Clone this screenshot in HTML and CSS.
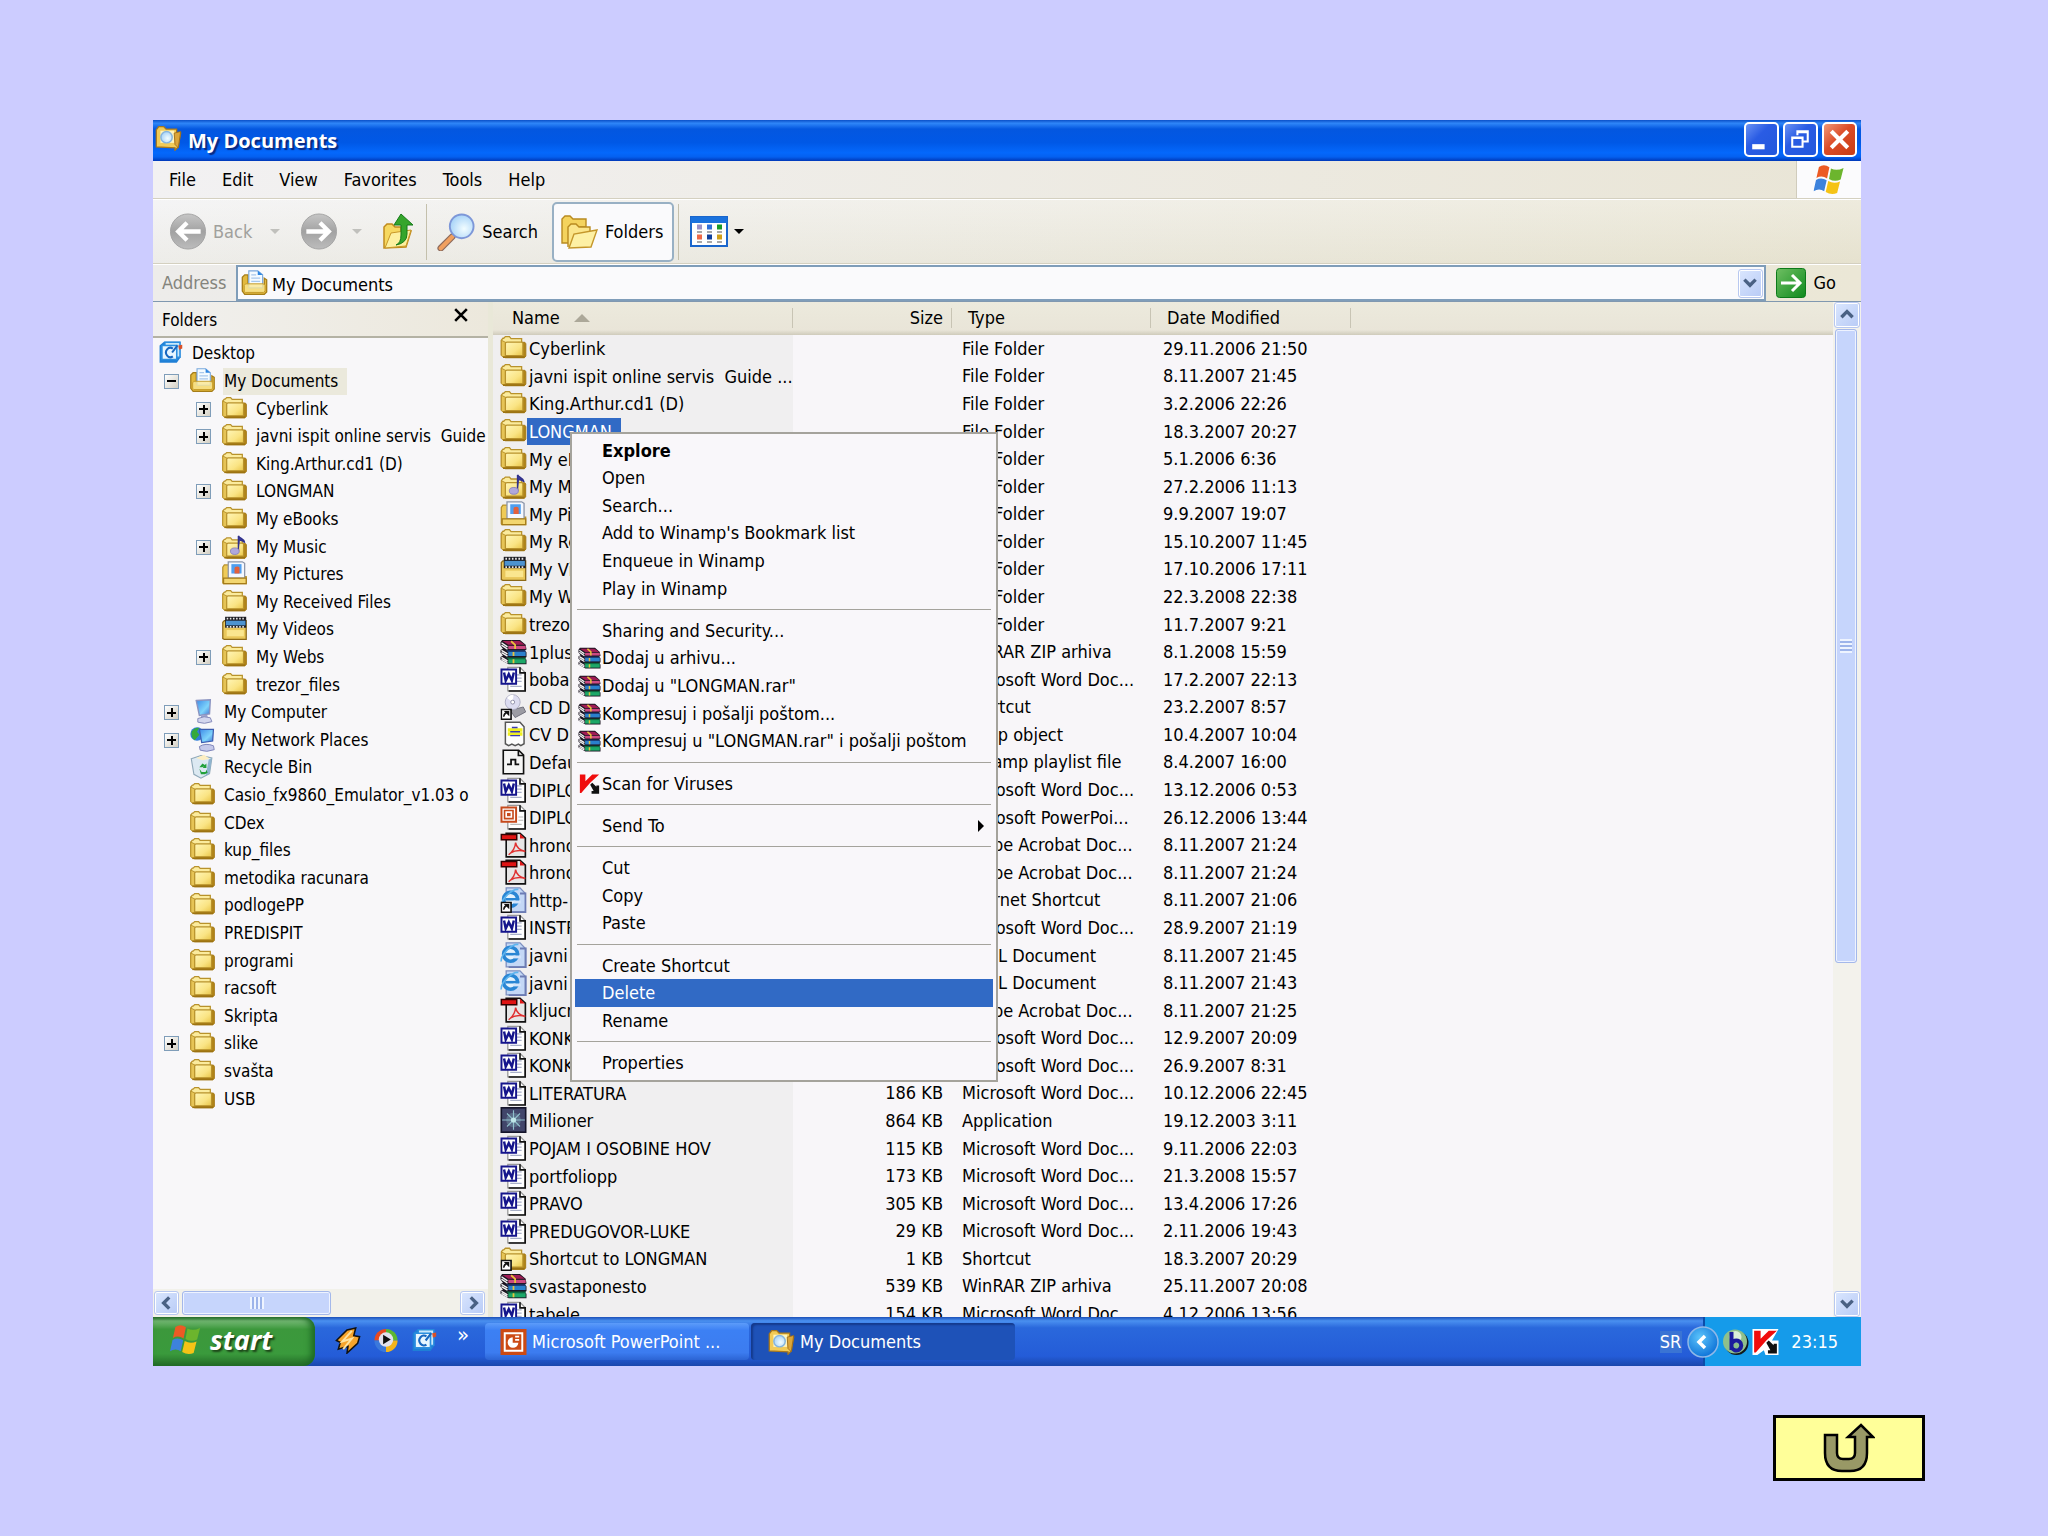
FILE: index.html
```html
<!DOCTYPE html>
<html lang="en">
<head>
<meta charset="utf-8">
<title>My Documents</title>
<link rel="stylesheet" href="styles.css">
</head>
<body>
<svg class="sprite" aria-hidden="true">
  <defs>
    <linearGradient id="g-gold" x1="0" y1="0" x2="1" y2="1"><stop offset="0" stop-color="#fff6b8"/><stop offset=".6" stop-color="#fae484"/><stop offset="1" stop-color="#e9c548"/></linearGradient>
    <linearGradient id="g-grey" x1="0" y1="0" x2="0" y2="1"><stop offset="0" stop-color="#c6c6c6"/><stop offset=".5" stop-color="#a2a2a2"/><stop offset="1" stop-color="#bcbcbc"/></linearGradient>
    <linearGradient id="g-green" x1="0" y1="0" x2="1" y2="1"><stop offset="0" stop-color="#6fbf63"/><stop offset="1" stop-color="#0e8a1c"/></linearGradient>
    <radialGradient id="g-lens" cx=".6" cy=".6" r=".6"><stop offset="0" stop-color="#f2fdff"/><stop offset="1" stop-color="#a9d4f8"/></radialGradient>
    <radialGradient id="g-tray" cx=".4" cy=".35" r=".7"><stop offset="0" stop-color="#5cc4fb"/><stop offset="1" stop-color="#0a6fd6"/></radialGradient>
    <linearGradient id="g-screen" x1="0" y1="0" x2="1" y2="1"><stop offset="0" stop-color="#3c8ae8"/><stop offset=".6" stop-color="#7fd4fb"/><stop offset="1" stop-color="#3d6fd0"/></linearGradient>
  </defs>
  <symbol id="folder" viewBox="0 0 16 16">
    <path d="M.5 12.500V3.200l1-1.200H2L3 1h2.500l1 1.200H13v3" fill="#fbeb9d" stroke="#b8922c" stroke-width=".8"/>
    <path d="M.5 3.200v9.500l1.500 1h2V5z" fill="#e6c456" stroke="#b8922c" stroke-width=".6"/>
    <path d="M13.500 4.500h1.500l.6.900V13l-.9 1H3z" fill="#b08418" stroke="#a67c1c" stroke-width=".6"/>
    <path d="M3 5.300q0-.9 1-.9h9q.8 0 .8.800v7.500H3z" fill="url(#g-gold)" stroke="#b8922c" stroke-width=".8"/>
    <path d="M1.500 13.600h13.300" stroke="#9c7312" stroke-width="1.100"/>
  </symbol>
  <symbol id="music" viewBox="0 0 16 16">
    <use href="#folder" y="1.500"/>
    <path d="M10.500 11V1.200c1 2 3.500 1.500 4 4.300-1-1.500-2.500-1.300-3-1.500" fill="#3a3a9c" stroke="#30308c" stroke-width=".9"/>
    <ellipse cx="8.200" cy="11" rx="2.800" ry="2.100" fill="#b0a8dc" stroke="#8078b8" stroke-width=".5"/>
  </symbol>
  <symbol id="pics" viewBox="0 0 16 16">
    <path d="M.5 14V4l1-1.500h3V10H15.500v4.500H1z" fill="#efcb57" stroke="#b8922c" stroke-width=".8"/>
    <path d="M4 .5h9l1.500 1V11H4z" fill="#f4f8ff" stroke="#8c95a8" stroke-width=".8"/>
    <path d="M6 2h6.500v6H6z" fill="#4f9ff0"/>
    <path d="M8 5q0-1.500 1.700-1.500T11.200 5v3H8z" fill="#e3603c"/>
    <path d="M1 11h14.500v3.500H1z" fill="#f3d670" stroke="#a67c18" stroke-width=".8"/>
  </symbol>
  <symbol id="video" viewBox="0 0 16 16">
    <path d="M.5 14.500V4l1-1h14v12H1.500z" fill="#e9c75a" stroke="#8d6a18" stroke-width=".8"/>
    <path d="M2 .5h13.500v7H2z" fill="#1c1c22"/>
    <path d="M2.500 3h12.500v3H2.500z" fill="#4d93cf"/>
    <path d="M3 1.700h12M3 6.900h12" stroke="#e8e8e8" stroke-width="1.100" stroke-dasharray="1 1"/>
    <path d="M3 9h11v4H3z" fill="#fae68f"/>
  </symbol>
  <symbol id="mydocs" viewBox="0 0 16 16">
    <path d="M.5 13V4.500L2 3h2v6h10V5l1.500 1v7.500L14 15H2z" fill="#e2b93e" stroke="#a57d18" stroke-width=".8"/>
    <path d="M4.500.5H10L13 3v8H4.500z" fill="#f4fbff" stroke="#7aa8dc" stroke-width=".7"/>
    <path d="M10 .5L13 3h-3z" fill="#2d86e2"/>
    <path d="M6 3h3M6 5h5.500M6 7h5.500" stroke="#a8c8ec" stroke-width=".8"/>
    <path d="M2.500 8.500h11l1 1V13l-1 .8h-11l-.8-.8V9.500z" fill="#fbe792" fill-opacity=".8" stroke="#c49a28" stroke-width=".6"/>
  </symbol>
  <symbol id="desk" viewBox="0 0 16 16">
    <path d="M1 3.500L4 1h10.500v10L12 14.500H1z" fill="#1f7fd6"/>
    <path d="M4.500 1.500H14v9.500H4.500z" fill="#c9e8fb" stroke="#2b8fe0" stroke-width=".8"/>
    <path d="M2.500 3.500h9.500v9H2.500z" fill="#e7f6ff" stroke="#2b8fe0"/>
    <path d="M9.500 5.500a2.800 3 0 1 0 0 5M9 8L12.500 3.500" fill="none" stroke="#1868c0" stroke-width="1.300"/>
    <path d="M13 3.500l2.500-.5v2.500l-2 .8z" fill="#d8502a"/>
  </symbol>
  <symbol id="computer" viewBox="0 0 16 16">
    <path d="M4 1l9-.5L12.500 9.500 6 10.500z" fill="url(#g-screen)" stroke="#8b93c0" stroke-width=".9"/>
    <path d="M7 10.500l4-.5.500 2H7z" fill="#9aa0cc"/>
    <path d="M5 12.500q4-2 8-.5l1 2.500q-5 2-9 .3z" fill="#d3d6ee" stroke="#8288b8" stroke-width=".6"/>
  </symbol>
  <symbol id="network" viewBox="0 0 16 16">
    <circle cx="4.500" cy="4.500" r="4.300" fill="#2f7edb"/>
    <path d="M1 3q2-3 5-2.500L4.500 3 6 5 3 8.500Q.5 6.500 1 3z" fill="#35a93c"/>
    <path d="M6 1.500h9L14.500 9 7.500 10z" fill="url(#g-screen)" stroke="#3c5cb0" stroke-width=".8"/>
    <path d="M6 12.500q4-2.500 9-.5l.5 2.500q-5 2-9 .3z" fill="#c5c9ea" stroke="#7c82b8" stroke-width=".6"/>
  </symbol>
  <symbol id="bin" viewBox="0 0 16 16">
    <path d="M.8 3L7 1l7 1.500L12.500 12.500 7 15.500 2.500 13z" fill="#dce9f2" stroke="#8fa8b8" stroke-width=".7"/>
    <path d="M4 2.500l5-2L12.500 3 8 4z" fill="#fdeec2"/>
    <path d="M12 3.500l2-1-1.500 10L10 14z" fill="#8fb4cf"/>
    <path d="M6 8.500l2-2.500 1.500 1 1-1v3H8L9 8 7.500 8.500zM6 9.500l1.500 2H10l.5-1.500.8 2L9.500 13H7z" fill="#22a03a"/>
  </symbol>
  <symbol id="word" viewBox="0 0 16 16">
    <path d="M4.500.8H12l3 3v11.500H4.500z" fill="#fff" stroke="#9a9a9a" stroke-width=".8"/>
    <path d="M12 .8v3.400h3.200V15.400H5" fill="none" stroke="#111" stroke-width="1"/>
    <path d="M10 5.500h3M10 7.500h3M10 9.500h3M6 12.500h7" stroke="#a9b0c8" stroke-width=".7"/>
    <path d="M.6 2.100h9v8.800h-9z" fill="#fff" stroke="#15158c" stroke-width="1.200"/>
    <path d="M2.200 4l1 5L5.100 5 7 9l1.200-5" fill="none" stroke="#15158c" stroke-width="1.500"/>
  </symbol>
  <symbol id="ppt" viewBox="0 0 16 16">
    <path d="M4.500.8H12l3 3v11.500H4.500z" fill="#fff" stroke="#9a9a9a" stroke-width=".8"/>
    <path d="M12 .8v3.400h3.200V15.400H5" fill="none" stroke="#111"/>
    <path d="M6 12.500h7M11 8h3M11 10h3" stroke="#b9b9b9" stroke-width=".7"/>
    <path d="M.6 2.100h9v8.800h-9z" fill="#fff" stroke="#c64a1c" stroke-width="1.200"/>
    <path d="M2.500 4h5.200v5H2.500z" fill="none" stroke="#c64a1c"/>
    <path d="M4 5.500h2.200v2H4z" fill="#c64a1c"/>
  </symbol>
  <symbol id="pdf" viewBox="0 0 16 16">
    <path d="M3.500.8H12l3.300 3v11.500H3.500z" fill="#e6e6e6" stroke="#111"/>
    <path d="M12 1l3 3h-3z" fill="#e01818"/>
    <path d="M.5 1.600h9.500v3.200H.5z" fill="#e01414" stroke="#300" stroke-width=".9"/>
    <path d="M5 14q4-3 4.300-7.500.5 4 6 5.500-5-1.500-9.300 1" fill="none" stroke="#e03030" stroke-width=".9"/>
  </symbol>
  <symbol id="html" viewBox="0 0 16 16">
    <path d="M3.500.5H12L15.300 4v11.300H3.500z" fill="#c4d8f6" stroke="#7e90c0" stroke-width=".8"/>
    <path d="M12 4h3.500v11.500H5" fill="none" stroke="#6c7cb4" stroke-width="1.200"/>
    <circle cx="6.200" cy="7.500" r="4.300" fill="#e4f2fd" stroke="#2a86d4" stroke-width="2.200"/>
    <path d="M3 7.500h8.500" stroke="#2a86d4" stroke-width="1.600"/>
    <path d="M8 9.200h4.500" stroke="#d4e4fa" stroke-width="1.800"/>
    <path d="M.5 12Q0 9 4 5t7-3.500" fill="none" stroke="#5db4ee"/>
  </symbol>
  <symbol id="arrowmark" viewBox="0 0 16 16">
    <path d="M.5 9.500h6v6h-6z" fill="#fff" stroke="#111"/>
    <path d="M2 14q0-2.500 2-2.500M3 10.800h2v2z" fill="#111" stroke="#111" stroke-width=".8"/>
  </symbol>
  <symbol id="url" viewBox="0 0 16 16"><use href="#html"/><use href="#arrowmark"/></symbol>
  <symbol id="flink" viewBox="0 0 16 16"><use href="#folder" y="1"/><use href="#arrowmark"/></symbol>
  <symbol id="cd" viewBox="0 0 16 16">
    <path d="M6 10l8-2 1.500 3L9 14.500z" fill="#9c9ca4" stroke="#70707c" stroke-width=".6"/>
    <circle cx="7.500" cy="5" r="4.600" fill="#dcdcf0" stroke="#b0b0c4" stroke-width=".6"/>
    <path d="M7.500 5L4 2.500a4.500 4.500 0 0 1 4-2z" fill="#fff"/>
    <circle cx="7.500" cy="5" r="1.200" fill="#fff" stroke="#9090a8" stroke-width=".6"/>
    <use href="#arrowmark"/>
  </symbol>
  <symbol id="scrap" viewBox="0 0 16 16">
    <path d="M3 .8h9l2.500 2.700V14l-2 1.200-1.500-1-2 1-2-1-2 1L3 14z" fill="#fdfdfd" stroke="#555" stroke-width=".9"/>
    <path d="M4.500 5.500h9M4.500 8h9" stroke="#eeee20" stroke-width="2.200"/>
    <path d="M7 4h3.500M6 6.600h6M6 9h6" stroke="#3a3ab0" stroke-width=".8"/>
  </symbol>
  <symbol id="plist" viewBox="0 0 16 16">
    <path d="M1.700.8h9.500l3 3v11.400H1.700z" fill="#f6f6f6" stroke="#111"/>
    <path d="M11 .8V4h3" fill="none" stroke="#111"/>
    <path d="M4 9.500h2.500v-3h2.700v3H11.500" fill="none" stroke="#111" stroke-width="1.100"/>
  </symbol>
  <symbol id="rar" viewBox="0 0 16 16">
    <path d="M1 .6h11l3.500 3L16 6.400l-1 .6 1 1.200V11l-1 .8 1 1v2.800H5L0 12.800V11l1.500-.8L0 8.500V6.800L1.500 6 0 4V2z" fill="#1b1420"/>
    <path d="M1.200 1.200h10.500L15 3.600H4.800z" fill="#a01c54"/>
    <path d="M4.800 4.200H15.500V6.200H4.800z" fill="#cc4a82"/>
    <path d="M3.500 7h12v.9h-11z" fill="#1c4e98"/>
    <path d="M4.800 8H15.500v2.500H4.800z" fill="#2a80cc"/>
    <path d="M3.500 11.400h12v.9h-11z" fill="#0e6a40"/>
    <path d="M4.800 12.400H15.500v2.600H4.800z" fill="#1ca868"/>
    <path d="M.6 2.300l3.700 2.600M.6 3.800l3.700 2.500M.6 7l3.700 2.200M.6 8.400l3.700 2.200M.6 11.300l3.700 2.200M.6 12.600l3.700 2" stroke="#f4f4f4" stroke-width=".9"/>
    <path d="M6.500 1.400L9 3.600v2.600M8 8v2.400M8 12.500v2.400" fill="none" stroke="#e8c23c" stroke-width="1.100"/>
  </symbol>
  <symbol id="mil" viewBox="0 0 16 16">
    <path d="M0 0h16v16H0z" fill="#14142a"/>
    <path d="M1 1h14v14H1z" fill="#41456a"/>
    <circle cx="8" cy="8" r="4.500" fill="#5a6c88"/>
    <path d="M8 2v12M1 8h14M4 4l8 8M12 4l-8 8" stroke="#8fc0cc" stroke-width=".7"/>
    <circle cx="8" cy="8" r="1.600" fill="#bfe6e8"/>
  </symbol>
  <symbol id="kav" viewBox="0 0 16 16">
    <path d="M1 1h4v5l5-5h5L8.500 7 2 14.500H1z" fill="#f00d0d"/>
    <path d="M8.500 8.500l1.500-1.500 3 3V9h2v6H9.500v-2h1.500z" fill="#111"/>
  </symbol>
  <symbol id="explorer" viewBox="0 0 16 16">
    <path d="M.5 13.500V3l1.500-2H5l1.500 1.500H13v2L15.500 5 14 13.500 12 15.500V14z" fill="#f2cb57" stroke="#a8781c" stroke-width=".8"/>
    <path d="M3 3.500h8.500V11H3z" fill="#fff4bc"/>
    <path d="M11.500 5l4-1L14 14l-2-2z" fill="#dca63a" stroke="#98681a" stroke-width=".5"/>
    <circle cx="6.800" cy="7.500" r="3.500" fill="url(#g-lens)" stroke="#86b4dc" stroke-width=".9"/>
  </symbol>
  <symbol id="flag" viewBox="0 0 16 16">
    <path d="M2.800 1.500q2.700-1.700 5.400.2L7 7.500Q4.300 5.600 1.500 7.200z" fill="#ec5a24"/>
    <path d="M9 2.300q3 1.500 6.500-.3L14 8q-3 1.500-6-.3z" fill="#6cb52d"/>
    <path d="M1.300 8.200q2.800-1.500 5.500.2L5.500 14Q3 12.400 0 14z" fill="#3d82dc"/>
    <path d="M7.600 8.800q3 1.600 6.100.2L12.200 15q-3 1.300-5.900-.5z" fill="#f5c316"/>
  </symbol>
  <symbol id="power" viewBox="0 0 16 16">
    <path d="M0 0h16v16H0z" fill="#cc4a14"/>
    <path d="M2.600 2.600h10.800v10.800H2.600z" fill="none" stroke="#fff" stroke-width="1.200"/>
    <path d="M7.500 5v3.500h3.500a3.300 3.300 0 1 1-3.500-3.500z" fill="#fff"/>
    <path d="M9 4.700h2.500M9 6.700h2.500" stroke="#fff"/>
  </symbol>
</svg>

<main class="slide">
<section class="screen">
  <header class="titlebar">
    <svg class="ico"><use href="#explorer"/></svg>
    <h1>My Documents</h1>
    <button class="cap" aria-label="Minimize"><svg viewBox="0 0 30 30"><path d="M6 22h12" stroke="#fff" stroke-width="5"/></svg></button>
    <button class="cap" aria-label="Restore"><svg viewBox="0 0 30 30" fill="none" stroke="#fff" stroke-width="2"><path d="M7 13h10v9H7zM7 13.500h10M12 11V7h10v10h-4M12 8h10"/></svg></button>
    <button class="cap close" aria-label="Close"><svg viewBox="0 0 30 30"><path d="M7 7l16 16M23 7L7 23" stroke="#fff" stroke-width="4"/></svg></button>
  </header>

  <nav class="menubar">
    <button>File</button><button>Edit</button><button>View</button><button>Favorites</button><button>Tools</button><button>Help</button>
    <span class="brand"><svg viewBox="0 0 16 16"><use href="#flag"/></svg></span>
  </nav>

  <div class="toolbar">
    <button class="tool off"><svg class="big" viewBox="0 0 38 38"><circle cx="19" cy="19" r="18" fill="url(#g-grey)" stroke="#a4a4a4"/><path d="M32 19H10M18 10l-9 9 9 9" fill="none" stroke="#fff" stroke-width="4.500"/></svg>Back<i class="drop"></i></button>
    <button class="tool off fwd" aria-label="Forward"><svg class="big" viewBox="0 0 38 38"><circle cx="19" cy="19" r="18" fill="url(#g-grey)" stroke="#a4a4a4"/><path d="M6 19h22M20 10l9 9-9 9" fill="none" stroke="#fff" stroke-width="4.500"/></svg><i class="drop"></i></button>
    <button class="tool up" aria-label="Up"><svg viewBox="0 0 32 38"><path d="M2 35V14l3-3h5l3 3h6v4h10l-5 16z" fill="#f6d860" stroke="#c08a1c" stroke-width="1.500"/><path d="M3 35l6-15 20-3-5 16z" fill="#fdf0a0" stroke="#c89828"/><path d="M14 32q5-2 5-10V12h-7L19 1l12 11h-6v9q0 9-11 11z" fill="#35a52c" stroke="#157a18"/></svg></button>
    <span class="rule"></span>
    <button class="tool find"><svg class="lens" viewBox="0 0 40 40"><path d="M16 25L4 37" stroke="#8c6a5c" stroke-width="7" stroke-linecap="round"/><path d="M16 25L4 37" stroke="#f0a060" stroke-width="4.500" stroke-linecap="round"/><circle cx="26" cy="14" r="12.500" fill="url(#g-lens)" stroke="#7d97d8" stroke-width="2"/></svg>Search</button>
    <button class="tool on"><svg class="big" viewBox="0 0 38 34"><path d="M1 28V4l3-3h5l3 3h13v8h-6v16z" fill="#f4d35e" stroke="#b88a20" stroke-width="1.400"/><path d="M7 32V12l3-3h5l3 3h11v4" fill="#fbe58a" stroke="#b88a20" stroke-width="1.400"/><path d="M8 33l5-14 23-4-6 17z" fill="#fdf0a4" stroke="#c4962a" stroke-width="1.400"/></svg>Folders</button>
    <span class="rule"></span>
    <button class="tool views" aria-label="Views"><svg class="big" viewBox="0 0 38 31"><rect x="1" y="1" width="36" height="29" fill="#fff" stroke="#1a66cc" stroke-width="2"/><path d="M1 4h36" stroke="#1a72dd" stroke-width="6"/><path d="M7 11h5" stroke="#9a90c8" stroke-width="5"/><path d="M17 11h5" stroke="#3070d8" stroke-width="5"/><path d="M27 11h5" stroke="#189a28" stroke-width="5"/><path d="M7 21h5" stroke="#ee6a48" stroke-width="5"/><path d="M17 21h5" stroke="#10409c" stroke-width="5"/><path d="M27 21h5" stroke="#d0a018" stroke-width="5"/><path d="M7 16h5M17 16h5M27 16h5M7 26h5M17 26h5M27 26h5" stroke="#a8a8a8" stroke-width="2"/></svg><i class="drop"></i></button>
  </div>

  <div class="addressbar">
    <label for="addr">Address</label>
    <div class="combo">
      <svg class="ico"><use href="#mydocs"/></svg>
      <input id="addr" type="text" value="My Documents">
      <button class="sb" aria-label="Show addresses"><svg viewBox="0 0 16 16"><path d="M3 5l5 5 5-5"/></svg></button>
    </div>
    <button class="go"><svg viewBox="0 0 30 30"><rect x=".5" y=".5" width="29" height="29" rx="3" fill="url(#g-green)" stroke="#0c7a1a"/><path d="M5 15h18M16 7l8 8-8 8" fill="none" stroke="#fff" stroke-width="3"/></svg>Go</button>
  </div>

  <div class="panes">
    <aside class="folders">
      <div class="folders-head"><h2>Folders</h2><button aria-label="Close folders"><svg viewBox="0 0 12 12"><path d="M1 1l10 10M11 1L1 11" stroke="#000" stroke-width="2.200"/></svg></button></div>
      <ul class="tree">
        <li><svg class="ico"><use href="#desk"/></svg><span>Desktop</span></li>
        <li class="l1"><button class="exp minus" aria-label="Collapse"></button><svg class="ico"><use href="#mydocs"/></svg><span class="cur">My Documents</span></li>
        <li class="l2"><button class="exp" aria-label="Expand"></button><svg class="ico"><use href="#folder"/></svg><span>Cyberlink</span></li>
        <li class="l2"><button class="exp" aria-label="Expand"></button><svg class="ico"><use href="#folder"/></svg><span>javni ispit online servis  Guide</span></li>
        <li class="l2"><svg class="ico"><use href="#folder"/></svg><span>King.Arthur.cd1 (D)</span></li>
        <li class="l2"><button class="exp" aria-label="Expand"></button><svg class="ico"><use href="#folder"/></svg><span>LONGMAN</span></li>
        <li class="l2"><svg class="ico"><use href="#folder"/></svg><span>My eBooks</span></li>
        <li class="l2"><button class="exp" aria-label="Expand"></button><svg class="ico"><use href="#music"/></svg><span>My Music</span></li>
        <li class="l2"><svg class="ico"><use href="#pics"/></svg><span>My Pictures</span></li>
        <li class="l2"><svg class="ico"><use href="#folder"/></svg><span>My Received Files</span></li>
        <li class="l2"><svg class="ico"><use href="#video"/></svg><span>My Videos</span></li>
        <li class="l2"><button class="exp" aria-label="Expand"></button><svg class="ico"><use href="#folder"/></svg><span>My Webs</span></li>
        <li class="l2"><svg class="ico"><use href="#folder"/></svg><span>trezor_files</span></li>
        <li class="l1"><button class="exp" aria-label="Expand"></button><svg class="ico"><use href="#computer"/></svg><span>My Computer</span></li>
        <li class="l1"><button class="exp" aria-label="Expand"></button><svg class="ico"><use href="#network"/></svg><span>My Network Places</span></li>
        <li class="l1"><svg class="ico"><use href="#bin"/></svg><span>Recycle Bin</span></li>
        <li class="l1"><svg class="ico"><use href="#folder"/></svg><span>Casio_fx9860_Emulator_v1.03 o</span></li>
        <li class="l1"><svg class="ico"><use href="#folder"/></svg><span>CDex</span></li>
        <li class="l1"><svg class="ico"><use href="#folder"/></svg><span>kup_files</span></li>
        <li class="l1"><svg class="ico"><use href="#folder"/></svg><span>metodika racunara</span></li>
        <li class="l1"><svg class="ico"><use href="#folder"/></svg><span>podlogePP</span></li>
        <li class="l1"><svg class="ico"><use href="#folder"/></svg><span>PREDISPIT</span></li>
        <li class="l1"><svg class="ico"><use href="#folder"/></svg><span>programi</span></li>
        <li class="l1"><svg class="ico"><use href="#folder"/></svg><span>racsoft</span></li>
        <li class="l1"><svg class="ico"><use href="#folder"/></svg><span>Skripta</span></li>
        <li class="l1"><button class="exp" aria-label="Expand"></button><svg class="ico"><use href="#folder"/></svg><span>slike</span></li>
        <li class="l1"><svg class="ico"><use href="#folder"/></svg><span>svašta</span></li>
        <li class="l1"><svg class="ico"><use href="#folder"/></svg><span>USB</span></li>
      </ul>
      <div class="hscroll">
        <button class="sb" aria-label="Scroll left"><svg viewBox="0 0 16 16"><path d="M10 3L5 8l5 5"/></svg></button>
        <div class="thumb"><i class="grip"></i></div>
        <button class="sb" aria-label="Scroll right"><svg viewBox="0 0 16 16"><path d="M6 3l5 5-5 5"/></svg></button>
      </div>
    </aside>

    <div class="list">
      <div class="files">
      <table>
        <colgroup><col class="c-name"><col class="c-size"><col class="c-type"><col class="c-date"><col></colgroup>
        <thead><tr><th scope="col">Name<i class="sort"></i></th><th scope="col">Size</th><th scope="col">Type</th><th scope="col">Date Modified</th><td></td></tr></thead>
        <tbody>
          <tr><td><svg class="ico"><use href="#folder"/></svg><span>Cyberlink</span></td><td></td><td>File Folder</td><td>29.11.2006 21:50</td><td></td></tr>
          <tr><td><svg class="ico"><use href="#folder"/></svg><span>javni ispit online servis  Guide ...</span></td><td></td><td>File Folder</td><td>8.11.2007 21:45</td><td></td></tr>
          <tr><td><svg class="ico"><use href="#folder"/></svg><span>King.Arthur.cd1 (D)</span></td><td></td><td>File Folder</td><td>3.2.2006 22:26</td><td></td></tr>
          <tr><td><svg class="ico"><use href="#folder"/></svg><span class="sel">LONGMAN</span></td><td></td><td>File Folder</td><td>18.3.2007 20:27</td><td></td></tr>
          <tr><td><svg class="ico"><use href="#folder"/></svg><span>My eBooks</span></td><td></td><td>File Folder</td><td>5.1.2006 6:36</td><td></td></tr>
          <tr><td><svg class="ico"><use href="#music"/></svg><span>My Music</span></td><td></td><td>File Folder</td><td>27.2.2006 11:13</td><td></td></tr>
          <tr><td><svg class="ico"><use href="#pics"/></svg><span>My Pictures</span></td><td></td><td>File Folder</td><td>9.9.2007 19:07</td><td></td></tr>
          <tr><td><svg class="ico"><use href="#folder"/></svg><span>My Received Files</span></td><td></td><td>File Folder</td><td>15.10.2007 11:45</td><td></td></tr>
          <tr><td><svg class="ico"><use href="#video"/></svg><span>My Videos</span></td><td></td><td>File Folder</td><td>17.10.2006 17:11</td><td></td></tr>
          <tr><td><svg class="ico"><use href="#folder"/></svg><span>My Webs</span></td><td></td><td>File Folder</td><td>22.3.2008 22:38</td><td></td></tr>
          <tr><td><svg class="ico"><use href="#folder"/></svg><span>trezor_files</span></td><td></td><td>File Folder</td><td>11.7.2007 9:21</td><td></td></tr>
          <tr><td><svg class="ico"><use href="#rar"/></svg><span>1plus</span></td><td></td><td>WinRAR ZIP arhiva</td><td>8.1.2008 15:59</td><td></td></tr>
          <tr><td><svg class="ico"><use href="#word"/></svg><span>boba</span></td><td></td><td>Microsoft Word Doc...</td><td>17.2.2007 22:13</td><td></td></tr>
          <tr><td><svg class="ico"><use href="#cd"/></svg><span>CD D</span></td><td></td><td>Shortcut</td><td>23.2.2007 8:57</td><td></td></tr>
          <tr><td><svg class="ico"><use href="#scrap"/></svg><span>CV Dr</span></td><td></td><td>Scrap object</td><td>10.4.2007 10:04</td><td></td></tr>
          <tr><td><svg class="ico"><use href="#plist"/></svg><span>Default</span></td><td></td><td>Winamp playlist file</td><td>8.4.2007 16:00</td><td></td></tr>
          <tr><td><svg class="ico"><use href="#word"/></svg><span>DIPLO</span></td><td></td><td>Microsoft Word Doc...</td><td>13.12.2006 0:53</td><td></td></tr>
          <tr><td><svg class="ico"><use href="#ppt"/></svg><span>DIPLO</span></td><td></td><td>Microsoft PowerPoi...</td><td>26.12.2006 13:44</td><td></td></tr>
          <tr><td><svg class="ico"><use href="#pdf"/></svg><span>hrono</span></td><td></td><td>Adobe Acrobat Doc...</td><td>8.11.2007 21:24</td><td></td></tr>
          <tr><td><svg class="ico"><use href="#pdf"/></svg><span>hrono</span></td><td></td><td>Adobe Acrobat Doc...</td><td>8.11.2007 21:24</td><td></td></tr>
          <tr><td><svg class="ico"><use href="#url"/></svg><span>http-</span></td><td></td><td>Internet Shortcut</td><td>8.11.2007 21:06</td><td></td></tr>
          <tr><td><svg class="ico"><use href="#word"/></svg><span>INSTR</span></td><td></td><td>Microsoft Word Doc...</td><td>28.9.2007 21:19</td><td></td></tr>
          <tr><td><svg class="ico"><use href="#html"/></svg><span>javni</span></td><td></td><td>HTML Document</td><td>8.11.2007 21:45</td><td></td></tr>
          <tr><td><svg class="ico"><use href="#html"/></svg><span>javni</span></td><td></td><td>HTML Document</td><td>8.11.2007 21:43</td><td></td></tr>
          <tr><td><svg class="ico"><use href="#pdf"/></svg><span>kljucn</span></td><td></td><td>Adobe Acrobat Doc...</td><td>8.11.2007 21:25</td><td></td></tr>
          <tr><td><svg class="ico"><use href="#word"/></svg><span>KONK</span></td><td></td><td>Microsoft Word Doc...</td><td>12.9.2007 20:09</td><td></td></tr>
          <tr><td><svg class="ico"><use href="#word"/></svg><span>KONK</span></td><td></td><td>Microsoft Word Doc...</td><td>26.9.2007 8:31</td><td></td></tr>
          <tr><td><svg class="ico"><use href="#word"/></svg><span>LITERATURA</span></td><td>186 KB</td><td>Microsoft Word Doc...</td><td>10.12.2006 22:45</td><td></td></tr>
          <tr><td><svg class="ico"><use href="#mil"/></svg><span>Milioner</span></td><td>864 KB</td><td>Application</td><td>19.12.2003 3:11</td><td></td></tr>
          <tr><td><svg class="ico"><use href="#word"/></svg><span>POJAM I OSOBINE HOV</span></td><td>115 KB</td><td>Microsoft Word Doc...</td><td>9.11.2006 22:03</td><td></td></tr>
          <tr><td><svg class="ico"><use href="#word"/></svg><span>portfoliopp</span></td><td>173 KB</td><td>Microsoft Word Doc...</td><td>21.3.2008 15:57</td><td></td></tr>
          <tr><td><svg class="ico"><use href="#word"/></svg><span>PRAVO</span></td><td>305 KB</td><td>Microsoft Word Doc...</td><td>13.4.2006 17:26</td><td></td></tr>
          <tr><td><svg class="ico"><use href="#word"/></svg><span>PREDUGOVOR-LUKE</span></td><td>29 KB</td><td>Microsoft Word Doc...</td><td>2.11.2006 19:43</td><td></td></tr>
          <tr><td><svg class="ico"><use href="#flink"/></svg><span>Shortcut to LONGMAN</span></td><td>1 KB</td><td>Shortcut</td><td>18.3.2007 20:29</td><td></td></tr>
          <tr><td><svg class="ico"><use href="#rar"/></svg><span>svastaponesto</span></td><td>539 KB</td><td>WinRAR ZIP arhiva</td><td>25.11.2007 20:08</td><td></td></tr>
          <tr><td><svg class="ico"><use href="#word"/></svg><span>tabele</span></td><td>154 KB</td><td>Microsoft Word Doc</td><td>4.12.2006 13:56</td><td></td></tr>
        </tbody>
      </table>
      </div>
      <div class="vscroll">
        <button class="sb" aria-label="Scroll up"><svg viewBox="0 0 16 16"><path d="M3 10l5-5 5 5"/></svg></button>
        <div class="thumb"><i class="grip"></i></div>
        <button class="sb" aria-label="Scroll down"><svg viewBox="0 0 16 16"><path d="M3 5l5 5 5-5"/></svg></button>
      </div>
      <div class="context" role="menu">
        <button role="menuitem" class="default">Explore</button>
        <button role="menuitem">Open</button>
        <button role="menuitem">Search...</button>
        <button role="menuitem">Add to Winamp's Bookmark list</button>
        <button role="menuitem">Enqueue in Winamp</button>
        <button role="menuitem">Play in Winamp</button>
        <hr>
        <button role="menuitem">Sharing and Security...</button>
        <button role="menuitem"><svg><use href="#rar"/></svg>Dodaj u arhivu...</button>
        <button role="menuitem"><svg><use href="#rar"/></svg>Dodaj u "LONGMAN.rar"</button>
        <button role="menuitem"><svg><use href="#rar"/></svg>Kompresuj i pošalji poštom...</button>
        <button role="menuitem"><svg><use href="#rar"/></svg>Kompresuj u "LONGMAN.rar" i pošalji poštom</button>
        <hr>
        <button role="menuitem"><svg><use href="#kav"/></svg>Scan for Viruses</button>
        <hr>
        <button role="menuitem" class="sub">Send To</button>
        <hr>
        <button role="menuitem">Cut</button>
        <button role="menuitem">Copy</button>
        <button role="menuitem">Paste</button>
        <hr>
        <button role="menuitem">Create Shortcut</button>
        <button role="menuitem" class="hot">Delete</button>
        <button role="menuitem">Rename</button>
        <hr>
        <button role="menuitem">Properties</button>
      </div>
    </div>
  </div>

  <footer class="taskbar">
    <button class="start"><svg viewBox="0 0 16 16"><use href="#flag"/></svg>start</button>
    <div class="quick">
      <button aria-label="Winamp"><svg viewBox="0 0 26 28"><path d="M12 3l9-2-2 8 6 1-2 7-11 10 1-7-10 3 2-7-4-2z" fill="#f6a42c" stroke="#111" stroke-width="1.600"/><path d="M17 4L7 15l10-3-9 11" fill="none" stroke="#fde3a0" stroke-width="2"/></svg></button>
      <button aria-label="Media Player"><svg viewBox="0 0 26 28"><path d="M13 14V2A12 12 0 0 0 1 14z" fill="#e84a20"/><path d="M13 14h12A12 12 0 0 0 13 2z" fill="#5cb832"/><path d="M13 14v12A12 12 0 0 0 25 14z" fill="#f3b41c"/><path d="M13 14H1a12 12 0 0 0 12 12z" fill="#3a78dc"/><circle cx="13" cy="13" r="7.500" fill="#e2e2ee"/><path d="M10 8l8 5-8 5z" fill="#111"/></svg></button>
      <button aria-label="Show Desktop"><svg viewBox="0 0 16 16"><use href="#desk"/></svg></button>
      <span class="more">»</span>
    </div>
    <button class="task"><svg class="ico"><use href="#power"/></svg>Microsoft PowerPoint ...</button>
    <button class="task active"><svg class="ico"><use href="#explorer"/></svg>My Documents</button>
    <span class="lang">SR</span>
    <div class="tray">
      <button aria-label="Show hidden icons"><svg class="chev" viewBox="0 0 32 32"><circle cx="16" cy="16" r="15" fill="url(#g-tray)" stroke="#8fb8e8" stroke-width="1.500"/><path d="M18 10l-6 6 6 6" fill="none" stroke="#fff" stroke-width="3.500"/></svg></button>
      <svg class="ico" viewBox="0 0 26 26"><circle cx="14" cy="14" r="12" fill="#10181c"/><circle cx="12.500" cy="12.500" r="12" fill="#8fc08c"/><circle cx="13" cy="8" r="6" fill="#dcf0d8"/><path d="M9 3v18M9 15a5 5 0 1 1 0 3" fill="none" stroke="#1c1c9c" stroke-width="4"/></svg>
      <svg class="ico" viewBox="0 0 16 16"><path d="M0 0h16l-4 7h4v9H8l-1-3-4 3H0z" fill="#fff"/><use href="#kav"/></svg>
      <time>23:15</time>
    </div>
  </footer>
</section>

<a class="back" href="#" aria-label="Return"><svg viewBox="0 0 52 50"><path d="M2 12h12v18q0 6 6 6h6q6 0 6-6V14h-7L38 2l12 12h-6v16q0 18-17 18h-8Q2 48 2 30z" fill="#999966" stroke="#000" stroke-width="2.500"/></svg></a>
</main>
</body>
</html>
```
FILE: styles.css
```css
* { box-sizing: border-box; }

body {
  margin: 0;
  background: #ccccff;
  color: #000;
  font: 18px/22px "DejaVu Sans Condensed", "DejaVu Sans", Tahoma, sans-serif;
}

button, input {
  font: inherit;
  color: inherit;
  background: none;
  border: 0;
  padding: 0;
  margin: 0;
  text-align: left;
  white-space: pre;
}

h1, h2, ul { margin: 0; padding: 0; font: inherit; list-style: none; }
svg { display: block; flex: none; }
.sprite { position: absolute; width: 0; height: 0; }
.ico { width: 27px; height: 26px; }

.slide {
  display: flex;
  flex-direction: column;
  padding: 120px 123px 54px 153px;
}

.screen {
  display: flex;
  flex-direction: column;
  margin-right: 64px;
  background: #ece9d8;
}

/* title bar */
.titlebar {
  display: flex;
  align-items: center;
  gap: 4px;
  height: 41px;
  padding: 0 4px 2px 2px;
  background: linear-gradient(#0a4fc8, #2f86f8 8%, #0457e0 22%, #0058e6 55%, #0468fc 80%, #0460f0 90%, #0038b8);
}
.titlebar h1 {
  flex: 1;
  padding: 2px 0 0 2px;
  font: bold 20px/28px "Open Sans", sans-serif;
  color: #fff;
  text-shadow: 2px 2px 1px #0a2a80;
}
.titlebar .ico { margin-bottom: 4px; }
.cap {
  width: 35px;
  height: 35px;
  border: 2px solid #fff;
  border-radius: 5px;
  background: linear-gradient(135deg, #6a92f4, #2a5ce4 40%, #2258dc);
}
.cap svg { width: 31px; height: 31px; }
.cap.close { background: linear-gradient(135deg, #f09878, #dc4c28 45%, #c83c14); }

/* menu bar */
.menubar {
  display: flex;
  height: 38px;
  padding-left: 16px;
  border-bottom: 1px solid #d4d0c0;
  background: linear-gradient(90deg, #f2f1f2, #e9e5d6);
}
.menubar button { padding-right: 26px; }
.brand {
  display: flex;
  align-items: center;
  justify-content: center;
  width: 65px;
  margin-left: auto;
  background: #fbfbfd;
  border-left: 1px solid #d0ccbc;
}
.brand svg { width: 34px; height: 31px; }

/* toolbar */
.toolbar {
  display: flex;
  align-items: center;
  height: 65px;
  padding-left: 16px;
  border-top: 1px solid #fff;
  border-bottom: 1px solid #d4d0c0;
  background: linear-gradient(#ffffff40, #dcd8c030), linear-gradient(90deg, #f1f1f2, #e8e4d2);
}
.tool { display: flex; align-items: center; gap: 6px; height: 60px; }
.tool.off { color: #a0a09c; }
.tool .big { width: 38px; height: 37px; }
.drop {
  margin-left: 12px;
  border: 5px solid transparent;
  border-top-color: #c0c0bc;
  border-bottom: 0;
}
.fwd { margin-left: 20px; }
.fwd .drop { margin-left: 8px; }
.up { margin-left: 20px; }
.up svg { width: 32px; height: 38px; }
.rule { width: 1px; height: 56px; margin-left: 12px; background: #c4c0ac; }
.find { margin-left: 9px; }
.lens { width: 40px; height: 38px; }
.tool.on {
  margin-left: 14px;
  padding: 0 9px 0 7px;
  border: 2px solid #98b0c4;
  border-radius: 5px;
  background: #fafafc;
}
.tool.on .big { height: 34px; }
.tool.on + .rule { margin-left: 4px; }
.views { margin-left: 11px; }
.views .big { height: 31px; }
.views .drop { margin-left: 0; border-top-color: #000; }

/* address bar */
.addressbar {
  display: flex;
  align-items: center;
  height: 37px;
  padding: 0 25px 0 9px;
  border-top: 1px solid #fff;
  background: linear-gradient(90deg, #edecea, #ebe7d6);
}
.addressbar label { width: 74px; color: #84847c; }
.combo {
  display: flex;
  align-items: center;
  flex: 1;
  height: 36px;
  padding: 0 1px 0 3px;
  border: 2px solid #7f9db9;
  background: #fafafc;
}
.combo input { flex: 1; min-width: 0; height: 32px; padding: 2px 0 0 4px; }
.go { display: flex; align-items: center; gap: 8px; margin-left: 10px; }
.go svg { width: 30px; height: 30px; }

/* shared scroll parts */
.sb {
  display: flex;
  align-items: center;
  justify-content: center;
  flex: none;
  width: 25px;
  height: 29px;
  border: 1px solid #b8c8f0;
  border-radius: 3px;
  background: linear-gradient(135deg, #dae6fe, #b8cbf6);
  box-shadow: inset 0 0 0 1px #fff;
}
.sb svg { width: 18px; height: 18px; fill: none; stroke: #4a6184; stroke-width: 3; }
.thumb {
  display: flex;
  align-items: center;
  justify-content: center;
  border: 1px solid #a4b8ea;
  border-radius: 3px;
  background: #c6d5fc;
  box-shadow: inset 0 0 0 1px #eef3ff;
}

/* panes */
.panes { display: flex; height: 1016px; border-top: 1px solid #8098b0; }
.folders {
  display: flex;
  flex-direction: column;
  width: 340px;
  border-right: 5px solid #e9e8d8;
  background: #f8f7f9;
}
.folders-head {
  display: flex;
  align-items: center;
  justify-content: space-between;
  height: 36px;
  padding: 2px 20px 0 9px;
  border-bottom: 2px solid #b4b2a4;
  background: linear-gradient(90deg, #f1f0ee, #ece8dc);
}
.folders-head h2 { font-size: 17px; }
.folders-head svg { width: 14px; height: 14px; margin-bottom: 10px; }
.tree {
  display: grid;
  grid-auto-rows: 1fr;
  height: 775px;
  padding-top: 2px;
  font-size: 17px;
}
.tree li {
  display: flex;
  align-items: center;
  gap: 7px;
  min-height: 0;
  padding-left: 4px;
  overflow: hidden;
  white-space: pre;
}
.tree .ico { height: 25px; margin-bottom: 2px; }
.tree .l1 { padding-left: 36px; }
.tree .l2 { padding-left: 68px; }
.tree span { padding: 1px; line-height: 25px; }
.tree .cur { padding-right: 9px; background: #ebe9dc; }
.exp {
  width: 15px;
  height: 15px;
  margin: 0 3px 0 -25px;
  border: 1px solid #7f9db9;
  background:
    linear-gradient(#000, #000) center / 9px 2px no-repeat,
    linear-gradient(#000, #000) center / 2px 9px no-repeat,
    linear-gradient(135deg, #fff, #d4d0c4);
}
.exp.minus {
  background:
    linear-gradient(#000, #000) center / 9px 2px no-repeat,
    linear-gradient(135deg, #fff, #d4d0c4);
}
.hscroll {
  display: flex;
  height: 28px;
  margin-top: auto;
  padding: 2px 3px 2px 1px;
  background: #f2f1ea;
}
.hscroll .sb { height: 24px; }
.hscroll .thumb { width: 149px; margin: 0 auto 0 3px; }
.hscroll .grip { width: 14px; height: 12px; background: repeating-linear-gradient(90deg, #eef4ff 0 2px, #9db4ea 2px 4px); }

.list { position: relative; display: flex; flex: 1; min-width: 0; }
.files { flex: 1; overflow: hidden; background: #f8f6f9; }
table { width: 100%; border-collapse: collapse; table-layout: fixed; }
.c-name { width: 300px; }
.c-size { width: 159px; }
.c-type { width: 199px; }
.c-date { width: 200px; }
thead tr { height: 33px; background: linear-gradient(#eceadd, #e9e5d8 85%, #cfcbbb); }
th {
  padding: 0 9px 2px 19px;
  font-weight: normal;
  text-align: left;
  background: linear-gradient(#c8c4b4, #c8c4b4) right 0 top 6px / 1px 20px no-repeat;
}
th:nth-child(2) { text-align: right; }
th:nth-child(3), th:nth-child(4) { padding-left: 16px; }
.sort {
  display: inline-block;
  margin-left: 14px;
  vertical-align: 2px;
  border: 8px solid transparent;
  border-top: 0;
  border-bottom-color: #aca899;
}
tbody { height: 993px; }
tbody td { padding: 0 0 0 10px; white-space: pre; }
tbody td:nth-child(1) { padding: 0 0 0 7px; background: #f0eff0; }
tbody td:nth-child(2) { padding-right: 9px; text-align: right; }
tbody td:nth-child(4) { padding-left: 12px; }
tbody .ico { float: left; }
tbody span { float: left; padding: 2px 0 2px 2px; line-height: 23px; }
tbody .sel { padding-right: 9px; color: #fff; background: #316ac5; }

.vscroll {
  display: flex;
  flex-direction: column;
  width: 28px;
  padding: 0 1px;
  background: #f3f2ec;
}
.vscroll .sb { height: 26px; width: 26px; }
.vscroll .thumb { height: 634px; margin: 1px 3px auto 1px; }
.vscroll .grip { width: 12px; height: 14px; background: repeating-linear-gradient(#eef4ff 0 2px, #9db4ea 2px 4px); }

/* context menu, floating over the list */
.context {
  position: absolute;
  left: 77px;
  top: 130px;
  display: flex;
  flex-direction: column;
  width: 428px;
  height: 650px;
  padding: 3px;
  border: 2px solid #a5a39c;
  background: #f9f7fa;
}
.context button {
  position: relative;
  display: flex;
  align-items: center;
  flex: 28 1 0;
  padding-left: 27px;
}
.context svg { position: absolute; left: 3px; width: 23px; height: 22px; }
.context hr {
  flex: 15 1 0;
  width: 100%;
  margin: 0;
  border: 0;
  background: linear-gradient(#a5a39c, #a5a39c) center / 414px 1px no-repeat;
}
.context .default { font-weight: bold; }
.context .hot { color: #fff; background: #316ac5; }
.context .sub::after {
  content: "";
  margin-left: auto;
  margin-right: 9px;
  border: 6px solid transparent;
  border-left-color: #000;
  border-right: 0;
}

/* taskbar */
.taskbar {
  display: flex;
  align-items: center;
  height: 49px;
  color: #fff;
  background: linear-gradient(#1c50b8, #4a90f0 8%, #2a68dc 22%, #245cd8 80%, #1a46ac);
}
.start {
  display: flex;
  align-items: center;
  gap: 9px;
  width: 162px;
  height: 49px;
  padding: 0 0 4px 17px;
  border-radius: 0 12px 12px 0;
  background: linear-gradient(#2c7030, #74b874 8%, #3c983c 25%, #3a9a3c 75%, #246c28);
  box-shadow: inset -4px 0 6px #1d6a24;
  font: italic bold 27px/32px "Open Sans", sans-serif;
  text-shadow: 2px 2px 2px #1c4418;
}
.start svg { width: 31px; height: 31px; }
.quick { display: flex; gap: 12px; width: 170px; padding: 0 0 2px 20px; }
.quick svg { width: 26px; height: 27px; }
.more { padding-left: 8px; line-height: 16px; font-size: 22px; }
.task {
  display: flex;
  align-items: center;
  gap: 5px;
  width: 264px;
  height: 37px;
  margin-right: 2px;
  padding-left: 15px;
  border-radius: 4px;
  background: linear-gradient(#5c9cfa, #3c80f4 20%, #3c7cf0 80%, #2c64d4);
}
.task.active { padding-left: 17px; background: #1e52b8; box-shadow: inset 2px 2px 2px #153a8c; }
.lang { margin-left: auto; padding-right: 6px; background: linear-gradient(90deg, #3a74d4 22px, transparent 22px); }
.tray {
  display: flex;
  align-items: center;
  height: 49px;
  padding-right: 23px;
  gap: 3px;
  background: linear-gradient(90deg, transparent 16px, #0c4ca8 16px 18px, transparent 18px), linear-gradient(90deg, transparent 16px, #159bea 16px);
}
.tray .chev { width: 32px; height: 32px; }
.tray time { padding-left: 9px; }

/* slide navigation */
.back {
  display: flex;
  align-items: center;
  justify-content: center;
  align-self: flex-end;
  width: 152px;
  height: 66px;
  margin-top: 49px;
  border: 3px solid #000;
  background: #ffff99;
}
.back svg { width: 52px; height: 50px; }
```
